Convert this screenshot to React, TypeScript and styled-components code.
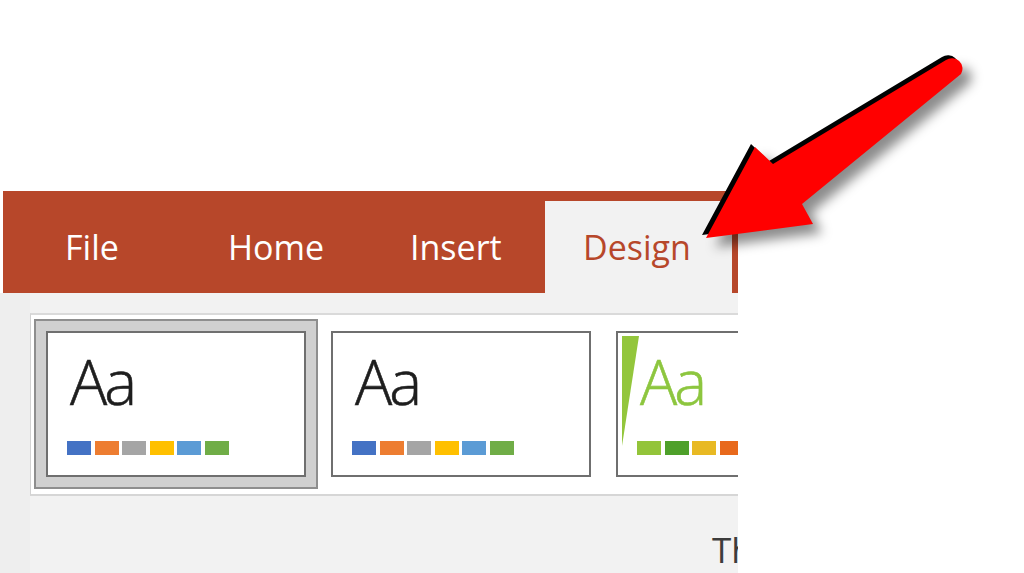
import styled, { createGlobalStyle } from "styled-components";

const GlobalStyle = createGlobalStyle`
  html, body {
    margin: 0;
    padding: 0;
    background: #ffffff;
  }
  body {
    font-family: "Open Sans", "Noto Sans", "Liberation Sans", sans-serif;
  }
`;

const Page = styled.div`
  position: relative;
  width: 1024px;
  height: 573px;
  overflow: hidden;
  background: #ffffff;
  padding-top: 191px;
  box-sizing: border-box;
`;

const Window = styled.div`
  width: 738px;
  height: 382px;
  display: flex;
  flex-direction: column;
  overflow: hidden;
`;

const TabBar = styled.div`
  height: 102px;
  margin-left: 3px;
  padding-left: 24px;
  background: #b7472a;
  display: flex;
  align-items: flex-end;
  flex: none;
`;

const Tab = styled.div<{ $w: number; $active?: boolean }>`
  width: ${(p) => p.$w}px;
  height: 92px;
  padding-left: 38px;
  box-sizing: border-box;
  display: flex;
  align-items: center;
  font-size: 34px;
  color: ${(p) => (p.$active ? "#b7472a" : "#ffffff")};
  background: ${(p) => (p.$active ? "#f2f2f2" : "transparent")};
  white-space: nowrap;
`;

const Ribbon = styled.div`
  flex: 1;
  display: flex;
  background: #f2f2f2;
`;

const LeftStrip = styled.div`
  width: 30px;
  flex: none;
  background: #eeeeee;
`;

const Main = styled.div`
  flex: 1;
  display: flex;
  flex-direction: column;
  padding-top: 20px;
`;

const Gallery = styled.div`
  width: 780px;
  height: 183px;
  flex: none;
  box-sizing: border-box;
  background: #ffffff;
  border-top: 2px solid #dadada;
  border-left: 1px solid #d2d2d2;
  border-bottom: 2px solid #d6d6d6;
  padding: 4px 0 0 3px;
  display: flex;
  gap: 1px;
  align-items: flex-start;
`;

const Slot = styled.div<{ $selected?: boolean }>`
  padding: 10px;
  border: 2px solid ${(p) => (p.$selected ? "#8e8e8e" : "transparent")};
  background: ${(p) => (p.$selected ? "#d0d0d0" : "transparent")};
  flex: none;
`;

const Thumb = styled.div`
  position: relative;
  width: 260px;
  height: 146px;
  box-sizing: border-box;
  border: 2px solid #6f6f6f;
  background: #ffffff;
  padding-left: 19px;
  display: flex;
  flex-direction: column;
`;

const Sample = styled.div<{ $color: string }>`
  margin: 17px 0 0 3px;
  font-size: 62px;
  line-height: 62px;
  font-weight: 300;
  letter-spacing: -3px;
  color: ${(p) => p.$color};
  -webkit-text-stroke: 0.6px ${(p) => p.$color};
`;

const Swatches = styled.div`
  margin-top: 29px;
  display: flex;
  gap: 3.5px;
`;

const Swatch = styled.div<{ $color: string }>`
  width: 24px;
  height: 14px;
  background: ${(p) => p.$color};
`;

const Wedge = styled.div`
  position: absolute;
  left: 4px;
  top: 3px;
  width: 17px;
  height: 110px;
  background: #93c63c;
  clip-path: polygon(0 0, 100% 0, 0 100%);
`;

const GroupLabel = styled.div`
  margin-top: 30px;
  padding-left: 682px;
  font-size: 35px;
  color: #3c3c3c;
  white-space: nowrap;
`;

const ArrowLayer = styled.svg`
  position: absolute;
  left: 0;
  top: 0;
  pointer-events: none;
`;

const officeColors = ["#4472c4", "#ed7d31", "#a5a5a5", "#ffc000", "#5b9bd5", "#70ad47"];
const greenColors = ["#93c43a", "#4ea02a", "#e8b923", "#e8691c", "#c9c9c9", "#7fb8d8"];

const themes = [
  { color: "#1e1e1e", swatches: officeColors, selected: true, wedge: false },
  { color: "#1e1e1e", swatches: officeColors, selected: false, wedge: false },
  { color: "#8dc63f", swatches: greenColors, selected: false, wedge: true },
];

const arrowPath =
  "M706 238 L755 147 L773 164 L946 60 A10.5 10.5 0 0 1 961 74 L802 204 L813 224 Z";

function Arrow() {
  return (
    <ArrowLayer width="1024" height="573" viewBox="0 0 1024 573">
      <defs>
        <filter id="soft" x="-20%" y="-20%" width="140%" height="140%">
          <feGaussianBlur stdDeviation="6" />
        </filter>
      </defs>
      <path d={arrowPath} fill="rgba(0,0,0,0.45)" transform="translate(9 9)" filter="url(#soft)" />
      <path d={arrowPath} fill="#000000" transform="translate(-4 -3)" />
      <path d={arrowPath} fill="#ff0000" />
    </ArrowLayer>
  );
}

export default function App() {
  return (
    <>
      <GlobalStyle />
      <Page>
        <Window>
          <TabBar>
            <Tab $w={163}>File</Tab>
            <Tab $w={182}>Home</Tab>
            <Tab $w={173}>Insert</Tab>
            <Tab $w={187} $active>
              Design
            </Tab>
          </TabBar>
          <Ribbon>
            <LeftStrip />
            <Main>
              <Gallery>
                {themes.map((t, i) => (
                  <Slot key={i} $selected={t.selected}>
                    <Thumb>
                      {t.wedge && <Wedge />}
                      <Sample $color={t.color}>Aa</Sample>
                      <Swatches>
                        {t.swatches.map((c) => (
                          <Swatch key={c} $color={c} />
                        ))}
                      </Swatches>
                    </Thumb>
                  </Slot>
                ))}
              </Gallery>
              <GroupLabel>Themes</GroupLabel>
            </Main>
          </Ribbon>
        </Window>
        <Arrow />
      </Page>
    </>
  );
}
